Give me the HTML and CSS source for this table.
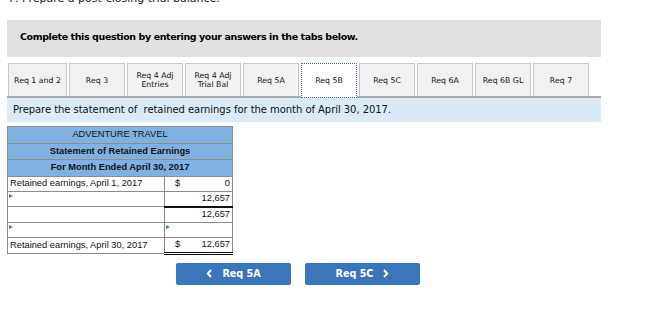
FILE: index.html
```html
<!DOCTYPE html>
<html>
<head>
<meta charset="utf-8">
<link rel="stylesheet" href="styles.css">
</head>
<body>
<div class="prev-line">7. Prepare a post-closing trial balance.</div>
<div class="question">Complete this question by entering your answers in the tabs below.</div>
<div class="tabbar">
  <div class="tab wide">Req 1 and 2</div>
  <div class="tab">Req 3</div>
  <div class="tab">Req 4 Adj<br>Entries</div>
  <div class="tab">Req 4 Adj<br>Trial Bal</div>
  <div class="tab">Req 5A</div>
  <div class="tab active">Req 5B</div>
  <div class="tab">Req 5C</div>
  <div class="tab">Req 6A</div>
  <div class="tab">Req 6B GL</div>
  <div class="tab">Req 7</div>
</div>
<div class="info">Prepare the statement of &nbsp;retained earnings for the month of April 30, 2017.</div>
<table class="stmt">
  <tr class="head"><td colspan="2">ADVENTURE TRAVEL</td></tr>
  <tr class="head bold"><td colspan="2">Statement of Retained Earnings</td></tr>
  <tr class="head bold"><td colspan="2">For Month Ended April 30, 2017</td></tr>
  <tr><td class="lbl">Retained earnings, April 1, 2017</td><td class="amt"><span class="cur">$</span><span class="num">0</span></td></tr>
  <tr><td class="lbl"><span class="tri"></span></td><td class="amt sub"><span class="cur"></span><span class="num">12,657</span></td></tr>
  <tr><td class="lbl"></td><td class="amt"><span class="cur"></span><span class="num">12,657</span></td></tr>
  <tr><td class="lbl"><span class="tri"></span></td><td class="amt"><span class="tri"></span><span class="cur"></span><span class="num"></span></td></tr>
  <tr><td class="lbl">Retained earnings, April 30, 2017</td><td class="amt total"><span class="cur">$</span><span class="num">12,657</span></td></tr>
</table>
<div class="nav">
  <div class="btn"><svg width="7" height="9" viewBox="0 0 7 9"><path d="M5 1 L1.8 4.5 L5 8" fill="none" stroke="#fff" stroke-width="2"/></svg><span>Req 5A</span></div>
  <div class="btn"><span>Req 5C</span><svg width="7" height="9" viewBox="0 0 7 9"><path d="M2 1 L5.2 4.5 L2 8" fill="none" stroke="#fff" stroke-width="2"/></svg></div>
</div>
</body>
</html>
```
FILE: styles.css
```css
html, body {
  margin: 0;
  padding: 0;
  background: #fff;
}
body {
  font-family: "DejaVu Sans", Verdana, sans-serif;
  color: #000;
  width: 659px;
  height: 310px;
  overflow: hidden;
}
.prev-line {
  font-size: 11px;
  line-height: 14px;
  height: 14px;
  margin-top: -8px;
  padding-left: 8px;
  color: #222;
}
.question {
  margin: 14px 0 0 7px;
  width: 594px;
  height: 37px;
  box-sizing: border-box;
  padding: 10px 0 0 13px;
  background: #e0e0e0;
  font-size: 9.5px;
  letter-spacing: -0.4px;
  font-weight: bold;
  line-height: 14px;
}
.tabbar {
  display: flex;
  align-items: flex-end;
  gap: 2px;
  margin: 6px 0 0 7px;
  padding-left: 1px;
  width: 593px;
  border-bottom: 2px solid #a9a9a9;
  height: 33px;
}
.tab {
  width: 56px;
  height: 33px;
  box-sizing: border-box;
  border: 1px solid #c8c8c8;
  border-bottom: none;
  background: #f2f2f2;
  font-size: 7.8px;
  line-height: 9px;
  display: flex;
  align-items: center;
  justify-content: center;
  text-align: center;
  color: #111;
}
.tab.wide {
  width: 59px;
}
.tab.active {
  background: #fff;
  border: 1px dotted #3a6fb0;
  height: 35px;
  margin-bottom: -2px;
}
.info {
  margin-left: 7px;
  width: 594px;
  height: 24px;
  box-sizing: border-box;
  padding: 5px 0 0 6px;
  background: #d9ebf9;
  font-size: 10px;
  letter-spacing: -0.05px;
  line-height: 14px;
  color: #111;
}
.stmt {
  margin: 4px 0 0 7px;
  border-collapse: collapse;
  width: 226px;
  font-family: "Liberation Sans", Arial, sans-serif;
  font-size: 9.3px;
  color: #111;
}
.stmt td {
  border: 1px solid #8c8c8c;
  height: 14px;
  padding: 0;
  line-height: 11px;
}
.head td {
  background: #7fb1e3;
  text-align: center;
  height: 15.5px;
}
.head.bold td {
  font-weight: bold;
}
.lbl {
  width: 154px;
  padding-left: 2px !important;
  position: relative;
}
.amt {
  position: relative;
  padding: 0 2px 0 0 !important;
  text-align: left;
}
.amt .cur {
  display: inline-block;
  width: 20px;
  padding-left: 10px;
  box-sizing: border-box;
}
.amt .num {
  float: right;
}
.stmt td.sub {
  border-bottom: 2px solid #111;
}
.stmt td.total {
  border-bottom: 3px double #111;
}
.tri {
  position: absolute;
  left: 1px;
  top: 2px;
  width: 0;
  height: 0;
  border-top: 2.5px solid transparent;
  border-bottom: 2.5px solid transparent;
  border-left: 4px solid #3d7fd0;
}
.nav {
  display: flex;
  gap: 14px;
  margin: 8px 0 0 176px;
}
.btn {
  width: 115px;
  height: 22px;
  background: #3c76ba;
  border-radius: 2px;
  color: #fff;
  font-weight: bold;
  font-size: 9.6px;
  display: flex;
  align-items: center;
  justify-content: center;
  gap: 9px;
}
.btn svg {
  display: block;
}
```
